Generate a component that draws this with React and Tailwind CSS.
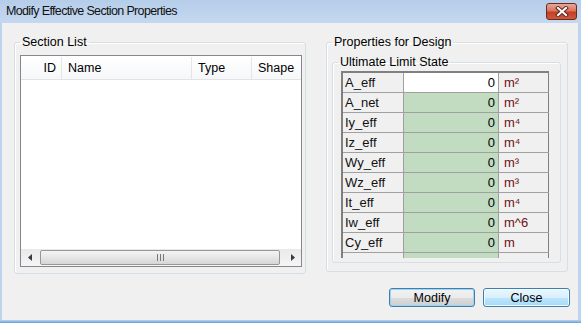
import React from 'react';

const rows = [
  { name: 'A_eff', unit: 'm²', first: true },
  { name: 'A_net', unit: 'm²' },
  { name: 'Iy_eff', unit: 'm⁴' },
  { name: 'Iz_eff', unit: 'm⁴' },
  { name: 'Wy_eff', unit: 'm³' },
  { name: 'Wz_eff', unit: 'm³' },
  { name: 'It_eff', unit: 'm⁴' },
  { name: 'Iw_eff', unit: 'm^6' },
  { name: 'Cy_eff', unit: 'm' },
  { name: '', unit: '', value: '' },
];

function CloseX() {
  return (
    <div className="w-[31px] h-[17px] rounded-[3px] border border-[#6a2a1e] bg-[linear-gradient(to_bottom,#e9a897_0%,#d9735d_45%,#c43f26_55%,#d0583d_100%)] flex items-center justify-center">
      <svg width="14" height="11" viewBox="0 0 14 11">
        <path d="M3 2 L11 9 M11 2 L3 9" stroke="#5b2a22" strokeWidth="4" strokeLinecap="square" />
        <path d="M3 2 L11 9 M11 2 L3 9" stroke="#ffffff" strokeWidth="2" strokeLinecap="square" />
      </svg>
    </div>
  );
}

function HScroll() {
  return (
    <div className="h-[17px] flex items-center bg-[linear-gradient(to_bottom,#e9e9e9,#f5f5f5)]">
      <div className="w-[17px] h-[17px] flex items-center justify-center">
        <svg width="4" height="7" viewBox="0 0 4 7"><path d="M4 0 L0 3.5 L4 7 Z" fill="#3a3a3a" /></svg>
      </div>
      <div className="ml-[2px] w-[240px] h-[15px] rounded-[2px] border border-[#979797] bg-[linear-gradient(to_bottom,#f4f4f4_0%,#e6e6e6_50%,#d6d6d6_100%)] flex items-center justify-center gap-[2px]">
        <div className="w-px h-[7px] bg-[#777]" />
        <div className="w-px h-[7px] bg-[#777]" />
        <div className="w-px h-[7px] bg-[#777]" />
      </div>
      <div className="ml-[4px] w-[17px] h-[17px] flex items-center justify-center">
        <svg width="4" height="7" viewBox="0 0 4 7"><path d="M0 0 L4 3.5 L0 7 Z" fill="#3a3a3a" /></svg>
      </div>
    </div>
  );
}

export default function App() {
  return (
    <div className="w-[581px] h-[323px] flex flex-col bg-[#bdd4ef] overflow-hidden font-['Liberation_Sans',Arial,sans-serif] text-black">
      {/* Title bar */}
      <div className="h-[23px] flex items-center justify-between pl-[6px] pr-[4px] bg-[linear-gradient(to_bottom,#b6cdea,#c4d8ef)]">
        <span className="text-[12.5px] tracking-[-0.65px] text-[#111]">Modify Effective Section Properties</span>
        <CloseX />
      </div>

      {/* Client */}
      <div className="flex-1 ml-[2px] mr-[3px] bg-[#f0f0f0] flex flex-col">
        <div className="flex items-start pt-[11px] pl-[12px]">
          {/* Section list */}
          <fieldset className="w-[292px] h-[240px] border border-[#d5dfe5] rounded-[3px] pl-[5px] pt-[5px] shadow-[inset_1px_1px_0_#fff]">
            <legend className="px-[2px] text-[12.5px] leading-[16px]">Section List</legend>
            <div className="w-[282px] h-[212px] border border-[#828790] bg-white flex flex-col">
              <div className="h-[24px] flex border-b border-[#e3e3e3] bg-[linear-gradient(to_bottom,#ffffff,#f6f7f9)] text-[12.5px] pt-px">
                <div className="w-[41px] border-r border-[#e5e5e5] flex items-center justify-end pr-[5px]">ID</div>
                <div className="w-[130px] border-r border-[#e5e5e5] flex items-center pl-[6px]">Name</div>
                <div className="w-[60px] border-r border-[#e5e5e5] flex items-center pl-[6px]">Type</div>
                <div className="flex-1 flex items-center pl-[6px]">Shape</div>
              </div>
              <div className="flex-1" />
              <HScroll />
            </div>
          </fieldset>

          {/* Properties for design */}
          <fieldset className="ml-[20px] w-[242px] h-[238px] border border-[#d5dfe5] rounded-[3px] pl-[5px] shadow-[inset_1px_1px_0_#fff]">
            <legend className="px-[2px] text-[12.5px] leading-[16px]">Properties for Design</legend>
            <fieldset className="mt-[4px] w-[229px] h-[209px] border border-[#d5dfe5] rounded-[3px] pl-[5px] shadow-[inset_1px_1px_0_#fff]">
              <legend className="px-[2px] text-[12.5px] leading-[16px]">Ultimate Limit State</legend>
              <div className="mt-[1px] ml-[3px] w-[208px] h-[187px] overflow-hidden border-t-2 border-l-2 border-[#808080] text-[13px]">
                {rows.map((r, i) => (
                  <div key={i} className="h-[20px] flex border-b border-[#a0a0a0]">
                    <div className="w-[61px] border-r border-[#a0a0a0] bg-[#f0f0f0] pl-[2px] leading-[19px] text-[#111]">{r.name}</div>
                    <div className={`w-[95px] border-r border-[#a0a0a0] pr-[3px] text-right leading-[19px] ${r.first ? 'bg-white' : 'bg-[#c1dcc1]'}`}>
                      {r.value === undefined ? '0' : r.value}
                    </div>
                    <div className="w-[50px] border-r border-[#808080] bg-[#f0f0f0] pl-[5px] leading-[19px] text-[#6e1212]">{r.unit}</div>
                  </div>
                ))}
              </div>
            </fieldset>
          </fieldset>
        </div>

        {/* Buttons */}
        <div className="mt-[14px] flex justify-end gap-[8px] pr-[8px] text-[12.5px]">
          <button className="w-[86px] h-[19px] rounded-[3px] border border-[#3c7fb1] shadow-[inset_0_0_0_1px_#9fd5f3] bg-[linear-gradient(to_bottom,#f2f2f2_0%,#ebebeb_50%,#dddddd_50%,#cfcfcf_100%)] leading-[16px]">Modify</button>
          <button className="w-[87px] h-[19px] rounded-[3px] border border-[#3c7fb1] shadow-[inset_0_0_0_1px_#f2fbff] bg-[linear-gradient(to_bottom,#eaf6fd_0%,#d9f0fc_50%,#bee6fd_50%,#a7d9f5_100%)] leading-[16px]">Close</button>
        </div>
      </div>
      <div className="h-[3px] bg-[linear-gradient(to_bottom,#bdd4ef,#5fa3d8)]" />
    </div>
  );
}
